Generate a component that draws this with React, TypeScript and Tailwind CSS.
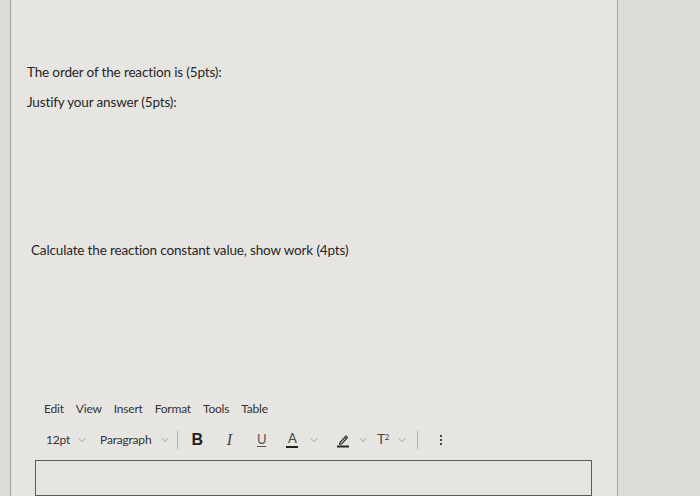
import { ChevronDown } from 'lucide-react';

const MENU = ['Edit', 'View', 'Insert', 'Format', 'Tools', 'Table'];

function Caret() {
  return <ChevronDown className="w-3 h-3 text-[#8a8a88]" strokeWidth={1.5} />;
}

function Highlighter() {
  return (
    <svg width="14" height="16" viewBox="0 0 14 16" fill="none">
      <path d="M4 10.5 L10 4 L11.5 5.5 L5.5 12 L3.5 12.5 Z" stroke="#3a3a3a" strokeWidth="1.2" strokeLinejoin="round" />
      <path d="M8.8 5.3 L10.3 6.8" stroke="#3a3a3a" strokeWidth="1.2" />
      <rect x="1" y="13.5" width="12" height="2" fill="#2a2a2a" />
    </svg>
  );
}

export default function App() {
  return (
    <div className="w-[700px] h-[496px] bg-[#dcdbd7] flex font-['Lato','Open_Sans',sans-serif] text-[#262626] overflow-hidden">
      <div className="w-[10px] shrink-0" />
      <div className="w-[608px] shrink-0 h-full bg-[#e6e5e1] border-l border-r border-[#a3a29f] flex flex-col">
        <div className="pl-[16px] pt-[62px] text-[13.5px] leading-[20px] tracking-[-0.15px]">
          <p>The order of the reaction is (5pts):</p>
          <p className="mt-[10px]">Justify your answer (5pts):</p>
          <p className="mt-[128px] pl-[4px]">Calculate the reaction constant value, show work (4pts)</p>
        </div>

        <div className="mt-[140px] pl-[33px] flex gap-[12px] text-[12px] text-[#333] tracking-[-0.2px]">
          {MENU.map(item => (
            <span key={item}>{item}</span>
          ))}
        </div>

        <div className="mt-[10px] pl-[35px] flex items-center h-[24px] text-[12px] text-[#333] tracking-[-0.2px]">
          <span className="flex items-center gap-[6px]">12pt <Caret /></span>
          <span className="ml-[12px] flex items-center gap-[8px]">Paragraph <Caret /></span>
          <span className="ml-[6px] w-px h-[18px] bg-[#b5b4b1]" />
          <span className="ml-[13px] font-['Liberation_Sans',sans-serif] text-[16px] font-bold text-[#222]">B</span>
          <span className="ml-[24px] font-['Liberation_Serif',serif] text-[16px] italic text-[#444]">I</span>
          <span className="ml-[25px] text-[13px] text-[#555] underline underline-offset-2">U</span>
          <span className="ml-[20px] flex flex-col items-center leading-none">
            <span className="text-[13px] text-[#444]">A</span>
            <span className="w-[12px] h-[2px] bg-[#222] mt-[1px]" />
          </span>
          <span className="ml-[10px]"><Caret /></span>
          <span className="ml-[16px]"><Highlighter /></span>
          <span className="ml-[7px]"><Caret /></span>
          <span className="ml-[8px] text-[13px] text-[#444]">T<sup className="text-[8px]">2</sup></span>
          <span className="ml-[7px]"><Caret /></span>
          <span className="ml-[9px] w-px h-[18px] bg-[#b5b4b1]" />
          <span className="ml-[22px] flex flex-col gap-[2px]">
            <span className="w-[2px] h-[2px] bg-[#444]" />
            <span className="w-[2px] h-[2px] bg-[#444]" />
            <span className="w-[2px] h-[2px] bg-[#444]" />
          </span>
        </div>

        <div className="mt-[8px] ml-[24px] mr-[25px] flex-1 border border-[#5a5a58] bg-[#e6e5e1]" />
      </div>
      <div className="flex-1" />
    </div>
  );
}
